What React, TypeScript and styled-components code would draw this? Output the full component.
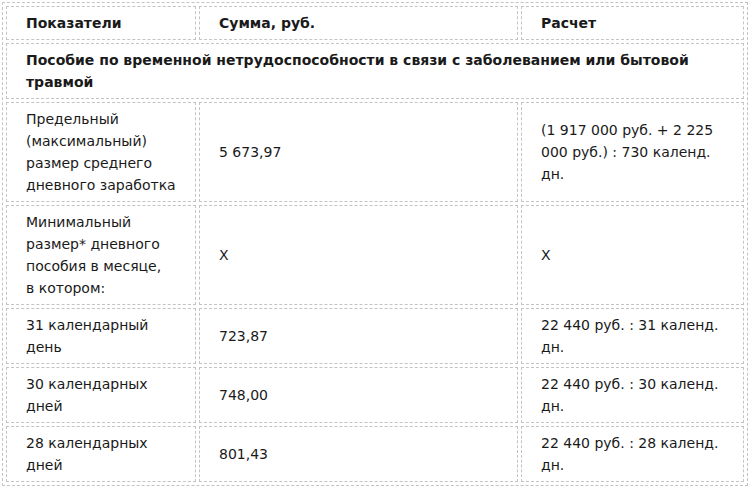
import styled, { createGlobalStyle } from "styled-components";

const GlobalStyle = createGlobalStyle`
  body {
    margin: 0;
    background: #fff;
  }
`;

type Row = {
  name: string;
  sum: string;
  calc: string;
};

// non-breaking space keeps the short preposition with its word
const rows: Row[] = [
  {
    name: "Предельный (максимальный) размер среднего дневного заработка",
    sum: "5 673,97",
    calc: "(1 917 000 руб. + 2 225 000 руб.) : 730 календ. дн.",
  },
  {
    name: "Минимальный размер* дневного пособия в месяце, в\u00a0котором:",
    sum: "X",
    calc: "X",
  },
  {
    name: "31 календарный день",
    sum: "723,87",
    calc: "22 440 руб. : 31 календ. дн.",
  },
  {
    name: "30 календарных дней",
    sum: "748,00",
    calc: "22 440 руб. : 30 календ. дн.",
  },
  {
    name: "28 календарных дней",
    sum: "801,43",
    calc: "22 440 руб. : 28 календ. дн.",
  },
];

function App() {
  return (
    <>
      <GlobalStyle />
      <Table>
        <colgroup>
          <Col $width={190} />
          <Col $width={319} />
          <Col $width={223} />
        </colgroup>
        <thead>
          <tr>
            <HeadCell>Показатели</HeadCell>
            <HeadCell>Сумма, руб.</HeadCell>
            <HeadCell>Расчет</HeadCell>
          </tr>
        </thead>
        <tbody>
          <tr>
            <HeadCell colSpan={3}>
              Пособие по временной нетрудоспособности в связи с заболеванием или
              бытовой травмой
            </HeadCell>
          </tr>
          {rows.map((row) => (
            <tr key={row.name}>
              <Cell>{row.name}</Cell>
              <Cell>{row.sum}</Cell>
              <Cell>{row.calc}</Cell>
            </tr>
          ))}
        </tbody>
      </Table>
    </>
  );
}

export default App;

const Table = styled.table`
  margin: 2px;
  width: 746px;
  table-layout: fixed;
  border: 1px dashed #c4c4c4;
  border-collapse: separate;
  border-spacing: 3px;
  font-family: "DejaVu Sans", Verdana, sans-serif;
  font-size: 14px;
  line-height: 22px;
  color: #1a1a1a;
`;

const Col = styled.col<{ $width: number }>`
  width: ${(p) => p.$width}px;
`;

const Cell = styled.td`
  box-sizing: border-box;
  padding: 5px 19px;
  border: 1px dashed #c4c4c4;
  vertical-align: middle;
  text-align: left;
`;

const HeadCell = styled(Cell).attrs({ as: "th" })`
  font-weight: bold;
`;
